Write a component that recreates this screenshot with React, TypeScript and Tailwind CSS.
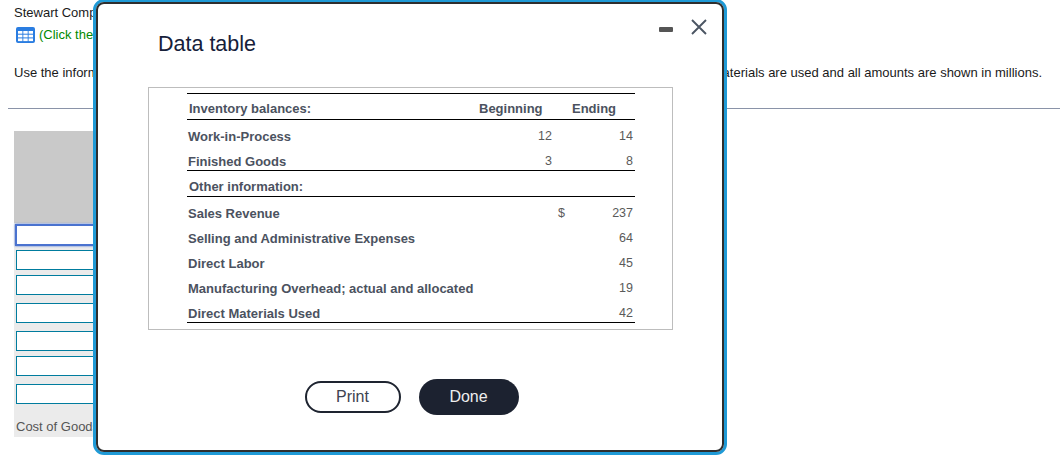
const rows = [
  { label: "Sales Revenue", sign: "$", value: "237" },
  { label: "Selling and Administrative Expenses", value: "64" },
  { label: "Direct Labor", value: "45" },
  { label: "Manufacturing Overhead; actual and allocated", value: "19" },
  { label: "Direct Materials Used", value: "42" },
];

const inputs = ["mt-[4px]", "mt-[5px]", "mt-[8px]", "mt-[8px]", "mt-[5px]", "mt-[8px]"];

function GridIcon() {
  return (
    <svg width="19" height="16" viewBox="0 0 19 16" className="shrink-0">
      <rect width="19" height="16" rx="2" fill="#2a7de1" />
      <g fill="#fff">
        <rect x="2" y="4" width="4.4" height="2.7" />
        <rect x="7.3" y="4" width="4.4" height="2.7" />
        <rect x="12.6" y="4" width="4.4" height="2.7" />
        <rect x="2" y="7.7" width="4.4" height="2.7" />
        <rect x="7.3" y="7.7" width="4.4" height="2.7" />
        <rect x="12.6" y="7.7" width="4.4" height="2.7" />
        <rect x="2" y="11.4" width="4.4" height="2.7" />
        <rect x="7.3" y="11.4" width="4.4" height="2.7" />
        <rect x="12.6" y="11.4" width="4.4" height="2.7" />
      </g>
    </svg>
  );
}

function DataTable() {
  return (
    <div className="mt-[30px] ml-[50px] h-[243px] w-[525px] border border-[#bdbdbd] pl-[38px] pt-[5px]">
      <div className="w-[448px] text-[13px] font-bold leading-[15px] text-[#4b5260]">
        <div className="flex h-[27px] items-end border-y border-black pb-[3px] pl-[2px]">
          <span className="flex-1">Inventory balances:</span>
          <span className="w-[93px]">Beginning</span>
          <span className="w-[63px]">Ending</span>
        </div>
        <div className="flex h-[25px] items-end pl-[1px]">
          <span className="flex-1 pb-[1px]">Work-in-Process</span>
          <span className="w-[91px] pb-[1px] text-right text-[12.5px] font-normal text-[#5a5a5a]">12</span>
          <span className="w-[83px] pb-[1px] pr-[2px] text-right text-[12.5px] font-normal text-[#5a5a5a]">14</span>
        </div>
        <div className="flex h-[26px] items-end border-b border-black pl-[1px]">
          <span className="flex-1 pb-[1px]">Finished Goods</span>
          <span className="w-[91px] pb-[1px] text-right text-[12.5px] font-normal text-[#5a5a5a]">3</span>
          <span className="w-[83px] pb-[1px] pr-[2px] text-right text-[12.5px] font-normal text-[#5a5a5a]">8</span>
        </div>
        <div className="flex h-[26px] items-end border-b border-black pb-[2px] pl-[2px]">Other information:</div>
        {rows.map((row) => (
          <div key={row.label} className="flex h-[25px] items-end pl-[1px] last:h-[26px] last:border-b last:border-black">
            <span className="flex-1 pb-[1px]">{row.label}</span>
            <span className="w-[47px] pb-[1px] text-[12.5px] font-normal text-[#5a5a5a]">{row.sign}</span>
            <span className="w-[30px] pb-[1px] pr-[2px] text-right text-[12.5px] font-normal text-[#5a5a5a]">{row.value}</span>
          </div>
        ))}
      </div>
    </div>
  );
}

export default function App() {
  return (
    <div className="relative h-[456px] w-[1060px] overflow-hidden bg-white font-['Liberation_Sans',sans-serif] text-[13px] text-[#1a1a1a]">
      <div className="pl-[14px] pt-[5px]">
        <p className="h-[15px] leading-[15px]">Stewart Company</p>
        <div className="mt-[6px] flex h-[17px] items-center gap-[4px] pl-[2px] leading-[15px] text-[#008a00]">
          <GridIcon />
          <span>(Click the icon</span>
        </div>
        <div className="mt-[22px] flex h-[15px] w-[1028px] items-center justify-between leading-[15px]">
          <span>Use the information</span>
          <span>materials are used and all amounts are shown in millions.</span>
        </div>
      </div>
      <div className="ml-[8px] mt-[28px] h-px bg-[#8a93a8]" />
      <div className="ml-[14px] mt-[22px] w-[300px]">
        <div className="h-[92px] bg-[#c9c9c9]" />
        <div className="h-[214px] bg-[#ebebeb] pl-[2px] pt-[1px]">
          <div className="ml-[-1px] h-[22px] w-[120px] border-2 border-[#4a72cf] bg-white shadow-[0_0_2px_#4a72cf]" />
          {inputs.map((gap, i) => (
            <div key={i} className={`${gap} h-[20px] w-[120px] border border-[#007c9e] bg-white`} />
          ))}
          <p className="mt-[15px] leading-[15px] text-[#555]">Cost of Goods</p>
        </div>
      </div>
      <div className="absolute left-[93px] top-[-1px] h-[456px] w-[634px] rounded-[11px] border-[3px] border-[#1f9ad6]">
        <div className="h-full rounded-[8px] border-2 border-[#2e2e2e] bg-white">
          <div className="relative">
            <h2 className="pl-[60px] pt-[27px] text-[21.5px] leading-[26px] text-[#16203a]">Data table</h2>
            <div className="absolute right-[15px] top-[15px] flex items-start gap-[18px]">
              <div className="mt-[8px] h-[5px] w-[14px] rounded-[1px] bg-[#555]" />
              <svg width="16" height="16" viewBox="0 0 16 16" fill="none" stroke="#4b5563" strokeWidth="1.9">
                <path d="M1 1 L15 15 M15 1 L1 15" />
              </svg>
            </div>
          </div>
          <DataTable />
          <div className="mt-[49px] flex items-center justify-center gap-[18px] pl-[3px] text-[16px]">
            <button className="h-[32px] w-[96px] rounded-full border-2 border-[#1e2430] bg-white text-[#3d4350]">Print</button>
            <button className="h-[36px] w-[100px] rounded-full bg-[#1c2230] text-[#eeeeee]">Done</button>
          </div>
        </div>
      </div>
    </div>
  );
}
